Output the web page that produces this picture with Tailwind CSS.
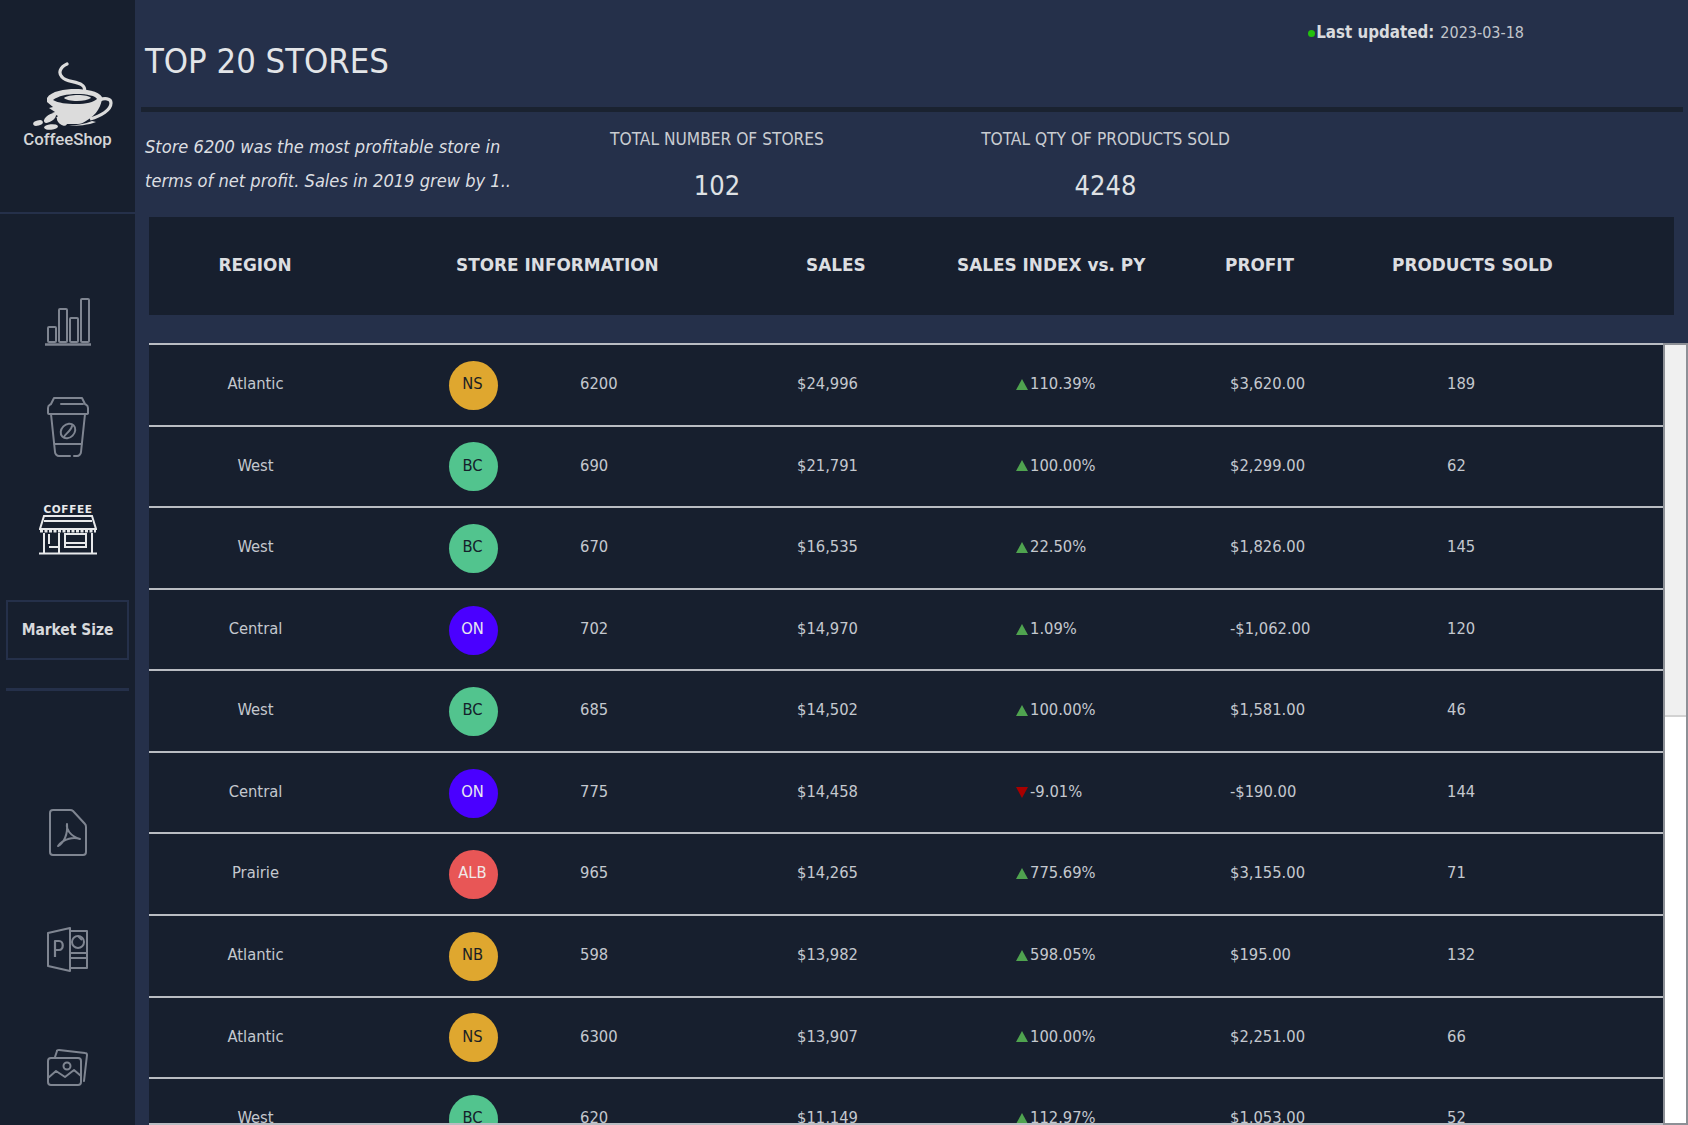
<!DOCTYPE html>
<html lang="en">
<head>
  <meta charset="UTF-8">
  <title>Top 20 Stores</title>
  <script src="https://cdn.jsdelivr.net/npm/@tailwindcss/browser@4"></script>
</head>
<body class="bg-[#25304a] font-['DejaVu_Sans_Condensed','DejaVu_Sans',sans-serif] text-[#c9ccd1] overflow-hidden">
<div class="flex w-[1688px] h-[1125px] overflow-hidden">

  <!-- Sidebar -->
  <aside class="w-[135px] shrink-0 bg-[#171f2e] flex flex-col items-center">
    <div class="w-full h-[214px] border-b-2 border-[#25304a] flex flex-col items-center pt-[62px]">
      <svg class="ml-[9px] w-[82px] h-[68px]" viewBox="0 0 82 68" fill="none">
        <path d="M36 2c-7 3-9 9-5 13 4 5 14 4 20 8 4 3 3 7 0 10" stroke="#dcdcdc" stroke-width="3.200" stroke-linecap="round"/>
        <path d="M16 36c4-7 18-9 28-9s24 2 27 8c0 8-5 18-16 24-3 2-5 3-8 3H34c-3-1-5-2-6-4l4-1-7-1 2-2-6-3 3-1-6-4 4-1-6-5z" fill="#dcdcdc"/>
        <path d="M22 38c5-4 14-6 24-6s19 2 20 5c-3 3-11 5-21 5-9 0-18-1-23-4z" fill="#171f2e"/>
        <path d="M33 36c2-2 8-3 14-3 6 0 12 1 13 3-3 2-8 3-14 3-6 0-11-1-13-3z" fill="#dcdcdc"/>
        <path d="M69 38c4-2 11-2 11 3 0 7-10 13-21 16" stroke="#dcdcdc" stroke-width="3.200"/>
        <path d="M38 64c8 0 20-1 27-4l-4-1c-7 3-15 4-23 5z" fill="#dcdcdc"/>
        <ellipse cx="7" cy="61" rx="5" ry="2.600" fill="#dcdcdc" transform="rotate(-15 7 61)"/>
        <ellipse cx="19" cy="56" rx="7" ry="3.400" fill="#dcdcdc" transform="rotate(-35 19 56)"/>
        <ellipse cx="20" cy="65" rx="7" ry="2.800" fill="#dcdcdc" transform="rotate(-5 20 65)"/>
        <ellipse cx="31" cy="59" rx="6" ry="3.600" fill="#dcdcdc" transform="rotate(40 31 59)"/>
      </svg>
      <span class="font-['Roboto',sans-serif] font-medium text-[16.800px] leading-[18px] text-[#d4d5d7]">CoffeeShop</span>
    </div>

    <svg class="mt-[84px] w-[46px] h-[48px]" viewBox="0 0 46 48" fill="none" stroke="#7f8591" stroke-width="2">
      <rect x="3" y="29" width="8" height="15" rx="1"/><rect x="14" y="11" width="8" height="33" rx="1"/><rect x="25" y="20" width="8" height="24" rx="1"/><rect x="36" y="1" width="8" height="43" rx="1"/>
      <path d="M0 46.500h46" stroke-width="2.400"/>
    </svg>

    <svg class="mt-[51px] w-[42px] h-[60px]" viewBox="0 0 42 60" fill="none" stroke="#7f8591" stroke-width="2" stroke-linecap="round" stroke-linejoin="round">
      <path d="M1 16V11c0-3 2-3 3-4l3-6h28l3 6c1 1 3 1 3 4v5c0 1-1 1-2 1H2c-1 0-1 0-1-1z"/>
      <path d="M14 7h22M4 17l4 38c0 2 2 4 4 4h11M38 17l-4 38c0 2-2 4-4 4h-3M7 47h28"/>
      <ellipse cx="21" cy="34" rx="8" ry="6.500" transform="rotate(-45 21 34)"/>
      <path d="M17 40c1-3 7-6 8-11"/>
    </svg>

    <svg class="mt-[46px] w-[58px] h-[52px]" viewBox="0 0 58 52" fill="none" stroke="#e8e9eb" stroke-width="2">
      <text x="29" y="9.500" text-anchor="middle" font-family="DejaVu Sans" font-weight="700" font-size="10.500" letter-spacing="0.600" fill="#e8e9eb" stroke="none">COFFEE</text>
      <path d="M5 13h48l4 13H1z"/><path d="M5 18h48"/>
      <path d="M1 28h56" stroke-width="3" stroke-dasharray="3 1.500"/>
      <path d="M5 30v20M53 30v20M0 50.500h58M20 30v20"/>
      <path d="M10 31v10M10 44h10"/>
      <rect x="26" y="31" width="21" height="13"/>
      <path d="M26 40h21"/>
    </svg>

    <div class="mt-[45px] w-[123px] h-[60px] border-2 border-[#25304a] flex items-center justify-center pt-[2px] font-bold text-[15.400px] text-[#d7d9dc]">Market Size</div>
    <div class="mt-[28px] w-[123px] h-[3px] bg-[#25304a]"></div>

    <svg class="mt-[118px] w-[38px] h-[47px]" viewBox="0 0 38 47" fill="none" stroke="#7f8591" stroke-width="2" stroke-linecap="round" stroke-linejoin="round">
      <path d="M4 1h17c1 0 2 0 3 1l12 13c1 1 1 2 1 3v25c0 2-1 3-3 3H4c-2 0-3-1-3-3V4c0-2 1-3 3-3z"/>
      <path d="M18 15c-1 5 3 12 13 15-6-2-16-1-22 7 6-3 10-12 9-22z"/>
    </svg>

    <svg class="mt-[71px] w-[41px] h-[45px]" viewBox="0 0 41 45" fill="none" stroke="#7f8591" stroke-width="2" stroke-linejoin="round">
      <path d="M1 6l22-5v43L1 39z"/>
      <path d="M23 4h17v37H23"/>
      <path d="M8 30V14h4c5 0 5 9 0 9H8" stroke-width="2.200"/>
      <circle cx="31" cy="15" r="6"/>
      <path d="M31 9l4 4M23 26h17M23 31h17"/>
    </svg>

    <svg class="mt-[77px] w-[41px] h-[37px]" viewBox="0 0 41 37" fill="none" stroke="#7f8591" stroke-width="2" stroke-linejoin="round" stroke-linecap="round">
      <path d="M8 8l2-6c0-1 1-1 2-1l26 3c1 0 2 1 2 2l-3 26"/>
      <rect x="1" y="9" width="33" height="27" rx="3"/>
      <path d="M1 29l8-7 9 6 9-7 7 6"/>
      <circle cx="20" cy="17" r="3.500"/>
    </svg>
  </aside>

  <!-- Main -->
  <main class="flex-1 flex flex-col min-w-0">
    <div class="h-[107px] flex justify-between pl-[10px] pr-[9px]">
      <h1 class="mt-[38px] text-[34.300px] leading-[46px] text-[#e3e5e8]">TOP 20 STORES</h1>
      <div class="mt-[22px] mr-[155px] h-[22px] flex items-center text-[16px] whitespace-nowrap">
        <span class="w-[7px] h-[7px] rounded-full bg-[#22c00e] mr-[1px]"></span>
        <span class="font-bold text-[16.800px] text-[#d9dbde]">Last updated:</span>
        <span class="ml-[6px] text-[#c2c6cc]">2023-03-18</span>
      </div>
    </div>
    <div class="ml-[6px] mr-[5px] h-[5px] bg-[#1a2230]"></div>

    <div class="h-[105px] grid grid-cols-[368px_408px_369px] pl-[10px]">
      <p class="mt-[18px] italic text-[18.100px] leading-[33.500px] text-[#dcdee1] whitespace-nowrap">Store 6200 was the most profitable store in<br>terms of net profit. Sales in 2019 grew by 1..</p>
      <div class="text-center">
        <div class="mt-[17px] text-[17.200px] leading-[20px] text-[#c9ccd1]">TOTAL NUMBER OF STORES</div>
        <div class="mt-[19px] text-[27px] leading-[36px] text-[#dfe1e4]">102</div>
      </div>
      <div class="text-center">
        <div class="mt-[17px] text-[17.200px] leading-[20px] text-[#c9ccd1]">TOTAL QTY OF PRODUCTS SOLD</div>
        <div class="mt-[19px] text-[27px] leading-[36px] text-[#dfe1e4]">4248</div>
      </div>
    </div>

    <!-- Table header -->
    <div class="ml-[14px] w-[1525px] h-[98px] shrink-0 bg-[#171f2e] grid grid-cols-[212px_445px_151px_268px_167px_1fr] pt-[36px] font-['DejaVu_Sans',sans-serif] text-[16.900px] leading-[24px] font-bold text-[#dcdee1]">
      <div class="text-center">REGION</div>
      <div class="pl-[95px]">STORE INFORMATION</div>
      <div>SALES</div>
      <div>SALES INDEX vs. PY</div>
      <div>PROFIT</div>
      <div>PRODUCTS SOLD</div>
    </div>

    <!-- Table body with scrollbar -->
    <div class="mt-[28px] ml-[14px] flex flex-1 min-h-0 overflow-hidden">
      <div class="w-[1514px] shrink-0 overflow-hidden border-b-2 border-[#b9bcc2] text-[16.400px] text-[#c4c8ce]">
        <div class="h-[81.580px] border-t-2 border-[#b9bcc2] bg-[#171f2e] grid grid-cols-[213px_218px_217px_219px_214px_217px_1fr] items-center pb-[1px]">
          <div class="text-center">Atlantic</div>
          <div class="pl-[87px]"><span class="w-[49px] h-[49px] rounded-full bg-[#dfa72f] text-[#1b1f25] flex items-center justify-center translate-y-[1px] pb-[2px] pr-[2px]">NS</span></div>
          <div>6200</div><div>$24,996</div>
          <div class="flex items-center"><span class="w-0 h-0 border-x-[6px] border-x-transparent border-b-[11px] border-b-[#4fa34f] mr-[2px]"></span>110.39%</div>
          <div>$3,620.00</div><div>189</div>
        </div>
        <div class="h-[81.580px] border-t-2 border-[#b9bcc2] bg-[#171f2e] grid grid-cols-[213px_218px_217px_219px_214px_217px_1fr] items-center pb-[1px]">
          <div class="text-center">West</div>
          <div class="pl-[87px]"><span class="w-[49px] h-[49px] rounded-full bg-[#52c48e] text-[#14202a] flex items-center justify-center translate-y-[1px] pb-[2px] pr-[2px]">BC</span></div>
          <div>690</div><div>$21,791</div>
          <div class="flex items-center"><span class="w-0 h-0 border-x-[6px] border-x-transparent border-b-[11px] border-b-[#4fa34f] mr-[2px]"></span>100.00%</div>
          <div>$2,299.00</div><div>62</div>
        </div>
        <div class="h-[81.580px] border-t-2 border-[#b9bcc2] bg-[#171f2e] grid grid-cols-[213px_218px_217px_219px_214px_217px_1fr] items-center pb-[1px]">
          <div class="text-center">West</div>
          <div class="pl-[87px]"><span class="w-[49px] h-[49px] rounded-full bg-[#52c48e] text-[#14202a] flex items-center justify-center translate-y-[1px] pb-[2px] pr-[2px]">BC</span></div>
          <div>670</div><div>$16,535</div>
          <div class="flex items-center"><span class="w-0 h-0 border-x-[6px] border-x-transparent border-b-[11px] border-b-[#4fa34f] mr-[2px]"></span>22.50%</div>
          <div>$1,826.00</div><div>145</div>
        </div>
        <div class="h-[81.580px] border-t-2 border-[#b9bcc2] bg-[#171f2e] grid grid-cols-[213px_218px_217px_219px_214px_217px_1fr] items-center pb-[1px]">
          <div class="text-center">Central</div>
          <div class="pl-[87px]"><span class="w-[49px] h-[49px] rounded-full bg-[#4a00ff] text-[#e8e8f0] flex items-center justify-center translate-y-[1px] pb-[2px] pr-[2px]">ON</span></div>
          <div>702</div><div>$14,970</div>
          <div class="flex items-center"><span class="w-0 h-0 border-x-[6px] border-x-transparent border-b-[11px] border-b-[#4fa34f] mr-[2px]"></span>1.09%</div>
          <div>-$1,062.00</div><div>120</div>
        </div>
        <div class="h-[81.580px] border-t-2 border-[#b9bcc2] bg-[#171f2e] grid grid-cols-[213px_218px_217px_219px_214px_217px_1fr] items-center pb-[1px]">
          <div class="text-center">West</div>
          <div class="pl-[87px]"><span class="w-[49px] h-[49px] rounded-full bg-[#52c48e] text-[#14202a] flex items-center justify-center translate-y-[1px] pb-[2px] pr-[2px]">BC</span></div>
          <div>685</div><div>$14,502</div>
          <div class="flex items-center"><span class="w-0 h-0 border-x-[6px] border-x-transparent border-b-[11px] border-b-[#4fa34f] mr-[2px]"></span>100.00%</div>
          <div>$1,581.00</div><div>46</div>
        </div>
        <div class="h-[81.580px] border-t-2 border-[#b9bcc2] bg-[#171f2e] grid grid-cols-[213px_218px_217px_219px_214px_217px_1fr] items-center pb-[1px]">
          <div class="text-center">Central</div>
          <div class="pl-[87px]"><span class="w-[49px] h-[49px] rounded-full bg-[#4a00ff] text-[#e8e8f0] flex items-center justify-center translate-y-[1px] pb-[2px] pr-[2px]">ON</span></div>
          <div>775</div><div>$14,458</div>
          <div class="flex items-center"><span class="w-0 h-0 border-x-[6px] border-x-transparent border-t-[11px] border-t-[#a80000] mr-[2px]"></span>-9.01%</div>
          <div>-$190.00</div><div>144</div>
        </div>
        <div class="h-[81.580px] border-t-2 border-[#b9bcc2] bg-[#171f2e] grid grid-cols-[213px_218px_217px_219px_214px_217px_1fr] items-center pb-[1px]">
          <div class="text-center">Prairie</div>
          <div class="pl-[87px]"><span class="w-[49px] h-[49px] rounded-full bg-[#e85656] text-[#f0e8e8] flex items-center justify-center translate-y-[1px] pb-[2px] pr-[2px]">ALB</span></div>
          <div>965</div><div>$14,265</div>
          <div class="flex items-center"><span class="w-0 h-0 border-x-[6px] border-x-transparent border-b-[11px] border-b-[#4fa34f] mr-[2px]"></span>775.69%</div>
          <div>$3,155.00</div><div>71</div>
        </div>
        <div class="h-[81.580px] border-t-2 border-[#b9bcc2] bg-[#171f2e] grid grid-cols-[213px_218px_217px_219px_214px_217px_1fr] items-center pb-[1px]">
          <div class="text-center">Atlantic</div>
          <div class="pl-[87px]"><span class="w-[49px] h-[49px] rounded-full bg-[#dfa72f] text-[#1b1f25] flex items-center justify-center translate-y-[1px] pb-[2px] pr-[2px]">NB</span></div>
          <div>598</div><div>$13,982</div>
          <div class="flex items-center"><span class="w-0 h-0 border-x-[6px] border-x-transparent border-b-[11px] border-b-[#4fa34f] mr-[2px]"></span>598.05%</div>
          <div>$195.00</div><div>132</div>
        </div>
        <div class="h-[81.580px] border-t-2 border-[#b9bcc2] bg-[#171f2e] grid grid-cols-[213px_218px_217px_219px_214px_217px_1fr] items-center pb-[1px]">
          <div class="text-center">Atlantic</div>
          <div class="pl-[87px]"><span class="w-[49px] h-[49px] rounded-full bg-[#dfa72f] text-[#1b1f25] flex items-center justify-center translate-y-[1px] pb-[2px] pr-[2px]">NS</span></div>
          <div>6300</div><div>$13,907</div>
          <div class="flex items-center"><span class="w-0 h-0 border-x-[6px] border-x-transparent border-b-[11px] border-b-[#4fa34f] mr-[2px]"></span>100.00%</div>
          <div>$2,251.00</div><div>66</div>
        </div>
        <div class="h-[81.580px] border-t-2 border-[#b9bcc2] bg-[#171f2e] grid grid-cols-[213px_218px_217px_219px_214px_217px_1fr] items-center pb-[1px]">
          <div class="text-center">West</div>
          <div class="pl-[87px]"><span class="w-[49px] h-[49px] rounded-full bg-[#52c48e] text-[#14202a] flex items-center justify-center translate-y-[1px] pb-[2px] pr-[2px]">BC</span></div>
          <div>620</div><div>$11,149</div>
          <div class="flex items-center"><span class="w-0 h-0 border-x-[6px] border-x-transparent border-b-[11px] border-b-[#4fa34f] mr-[2px]"></span>112.97%</div>
          <div>$1,053.00</div><div>52</div>
        </div>
      </div>
      <!-- Scrollbar -->
      <div class="w-[25px] shrink-0 flex flex-col bg-white border-2 border-[#8d9096]">
        <div class="h-[372px] bg-[#f0f0f0] border-b-2 border-[#d2d2d2]"></div>
      </div>
    </div>
  </main>
</div>
</body>
</html>
